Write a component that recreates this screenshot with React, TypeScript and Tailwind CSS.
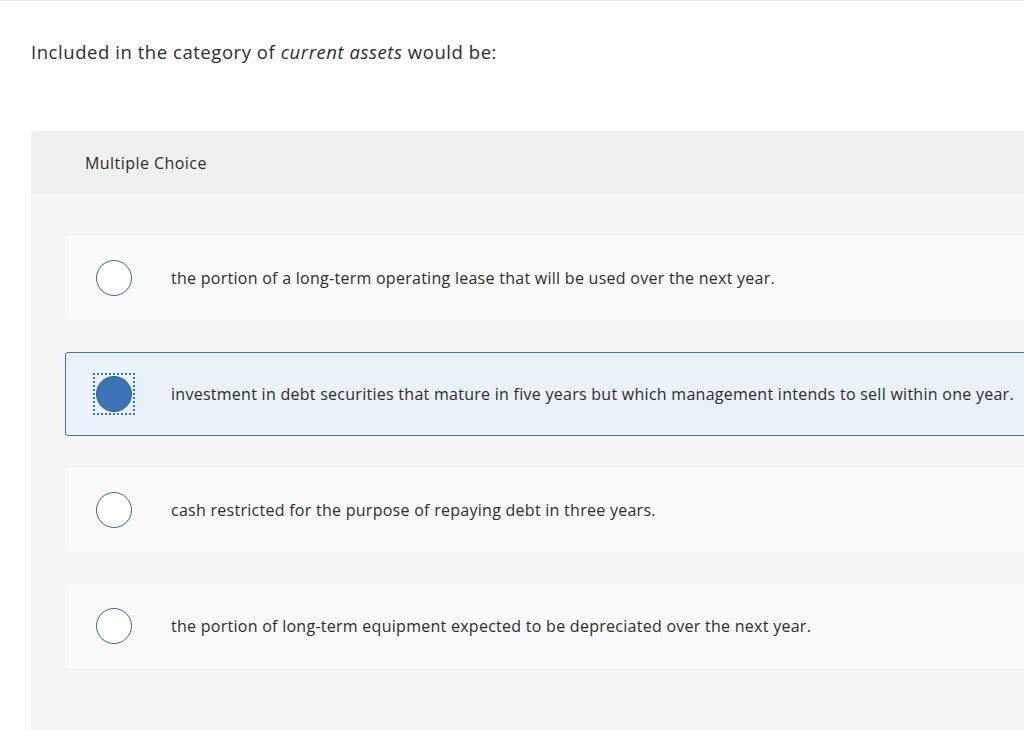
import React from "react";

const options = [
  "the portion of a long-term operating lease that will be used over the next year.",
  "investment in debt securities that mature in five years but which management intends to sell within one year.",
  "cash restricted for the purpose of repaying debt in three years.",
  "the portion of long-term equipment expected to be depreciated over the next year.",
];

export default function App() {
  return (
    <div
      className="w-[1024px] h-[730px] overflow-hidden bg-white border-t border-[#ececec] text-[#2d2d2d]"
      style={{ fontFamily: '"Open Sans", Lato, sans-serif' }}
    >
      <p className="ml-[31px] mt-[38px] text-[18.5px] leading-[26px] tracking-[0.55px] whitespace-nowrap">
        Included in the category of <i>current assets</i> would be:
      </p>
      <div className="ml-[31px] mt-[66px] w-[1040px] rounded-tl-[3px] bg-[#f5f5f5] h-[620px]">
        <div className="h-[63px] bg-[#f0f0f0] rounded-tl-[3px] flex items-center pl-[54px] text-[16px] tracking-[0.45px]">
          Multiple Choice
        </div>
        <div className="pl-[34px] pt-[42px] flex flex-col gap-[32px]">
          {options.map((t, i) => {
            const sel = i === 1;
            return (
              <div
                key={i}
                className={
                  "h-[84px] rounded-[3px] flex items-center pl-[30px] " +
                  (sel
                    ? "bg-[#e9f1f9] border border-[#3f78bd]"
                    : "bg-[#fafafa] border border-[#fafafa]")
                }
              >
                {sel ? (
                  <div className="ml-[-3px] mr-[-3px] w-[42px] h-[42px] shrink-0 border-2 border-dotted border-[#3a75b8] flex items-center justify-center">
                    <div className="w-[36px] h-[36px] shrink-0 rounded-full bg-[#3a74b5] border border-[#2c5f99]" />
                  </div>
                ) : (
                  <div className="w-[36px] h-[36px] shrink-0 rounded-full bg-white border-[1.5px] border-[#2f67a3]" />
                )}
                <span className="ml-[39px] text-[16px] leading-[20px] tracking-[0.27px] whitespace-nowrap">
                  {t}
                </span>
              </div>
            );
          })}
        </div>
      </div>
    </div>
  );
}
